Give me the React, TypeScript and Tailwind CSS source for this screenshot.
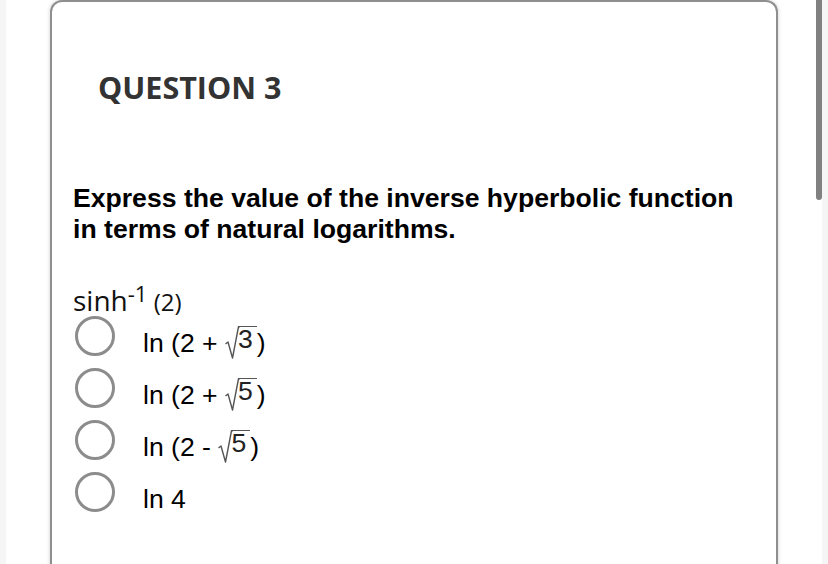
import React from "react";

const arial = { fontFamily: '"Liberation Sans", Arial, sans-serif' } as const;
const open = { fontFamily: '"Open Sans", sans-serif' } as const;

function Sqrt({ n }: { n: string }) {
  return (
    <span className="relative -top-[4px] inline-block pl-[13px]">
      <svg
        className="absolute left-0 top-0"
        width="15"
        height="33"
        viewBox="0 0 15 33"
        fill="none"
      >
        <polyline
          points="0.5,18 3,16 7.5,32 13.5,0.75 15,0.75"
          stroke="#555"
          strokeWidth="1.4"
          strokeLinejoin="round"
        />
      </svg>
      <span className="inline-block border-t-[1.5px] border-[#555] pr-[4px] leading-[24px] text-[#222]">
        {n}
      </span>
    </span>
  );
}

function Option({ children }: { children: React.ReactNode }) {
  return (
    <div className="flex h-[52px] items-start">
      <div className="ml-[2px] h-[40px] w-[40px] shrink-0 rounded-full border-[3px] border-[#8c8c8c] bg-white" />
      <div className="ml-[28px] mt-[14px] h-[26px] whitespace-nowrap text-[26.6px] leading-[26px] text-black" style={arial}>
        {children}
      </div>
    </div>
  );
}

export default function App() {
  return (
    <div className="flex h-[564px] w-[828px] overflow-hidden bg-white">
      <div className="w-[6px] shrink-0 bg-[#f6f6f6]" />
      <div className="w-[44px] shrink-0" />
      <div className="h-[600px] w-[728px] shrink-0 rounded-t-[12px] border-2 border-b-0 border-[#8f8f8f] bg-white shadow-[0_0_4px_rgba(0,0,0,0.18)]">
        <div
          className="ml-[46px] mt-[70px] text-[30.5px] font-bold leading-[30px] text-[#333]"
          style={open}
        >
          QUESTION 3
        </div>
        <div className="ml-[21px] mt-[81px]">
          <div className="text-[26.6px] font-bold leading-[31px] text-black" style={arial}>
            Express the value of the inverse hyperbolic function
            <br />
            in terms of natural logarithms.
          </div>
          <div className="mt-[41px] h-[30px] whitespace-nowrap text-[28px] leading-[28px] text-[#111]" style={open}>
            sinh<span className="relative -top-[9px] text-[22px] leading-none">-1</span>
            <span className="text-[24px] leading-none"> (2)</span>
          </div>
          <div className="flex flex-col">
            <Option>
              ln (2 + <Sqrt n="3" />)
            </Option>
            <Option>
              ln (2 + <Sqrt n="5" />)
            </Option>
            <Option>
              ln (2 - <Sqrt n="5" />)
            </Option>
            <Option>ln 4</Option>
          </div>
        </div>
      </div>
      <div className="w-[38px] shrink-0" />
      <div className="w-[6px] shrink-0">
        <div className="h-[200px] w-full rounded-b-[3px] bg-[#808080]" />
      </div>
      <div className="w-[6px] shrink-0 bg-[#f5f5f5]" />
    </div>
  );
}
